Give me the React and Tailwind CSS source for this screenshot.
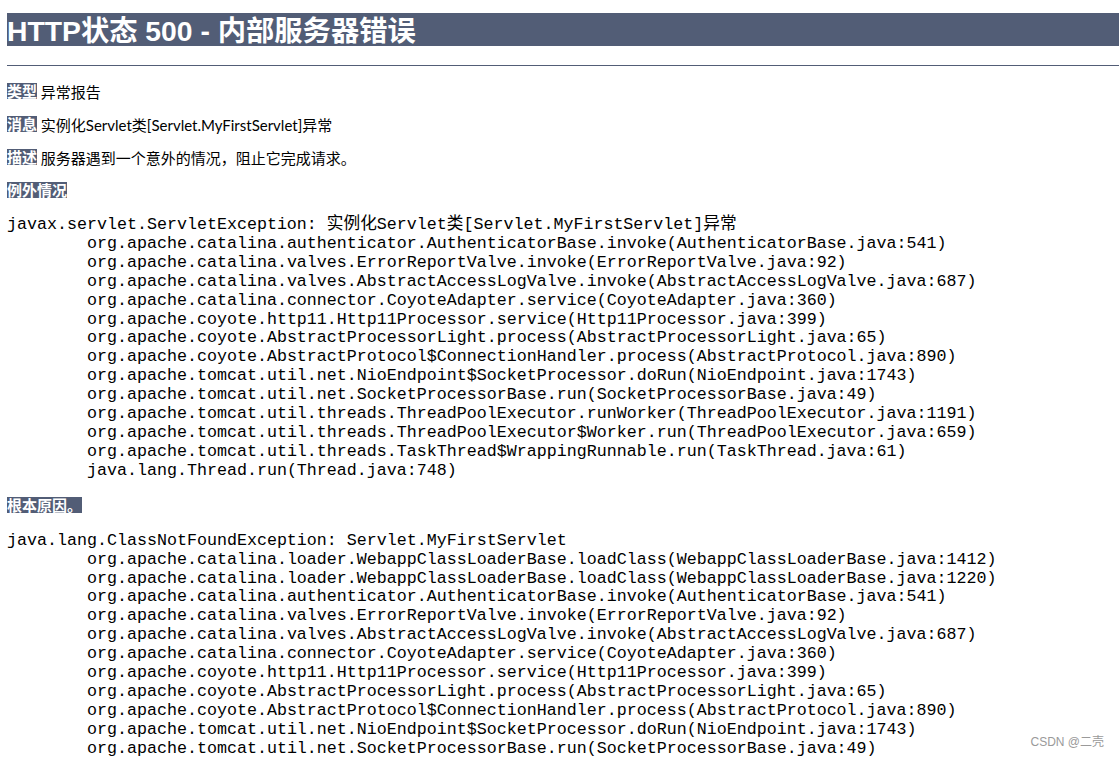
// @ts-nocheck

const sans = '"Liberation Sans", "Noto Sans CJK SC", sans-serif'
const body = 'Lato, "Noto Sans CJK SC", sans-serif'
const mono = '"Liberation Mono", "Noto Sans CJK SC", monospace'

const trace1 = [
    'javax.servlet.ServletException: 实例化Servlet类[Servlet.MyFirstServlet]异常',
    '\torg.apache.catalina.authenticator.AuthenticatorBase.invoke(AuthenticatorBase.java:541)',
    '\torg.apache.catalina.valves.ErrorReportValve.invoke(ErrorReportValve.java:92)',
    '\torg.apache.catalina.valves.AbstractAccessLogValve.invoke(AbstractAccessLogValve.java:687)',
    '\torg.apache.catalina.connector.CoyoteAdapter.service(CoyoteAdapter.java:360)',
    '\torg.apache.coyote.http11.Http11Processor.service(Http11Processor.java:399)',
    '\torg.apache.coyote.AbstractProcessorLight.process(AbstractProcessorLight.java:65)',
    '\torg.apache.coyote.AbstractProtocol$ConnectionHandler.process(AbstractProtocol.java:890)',
    '\torg.apache.tomcat.util.net.NioEndpoint$SocketProcessor.doRun(NioEndpoint.java:1743)',
    '\torg.apache.tomcat.util.net.SocketProcessorBase.run(SocketProcessorBase.java:49)',
    '\torg.apache.tomcat.util.threads.ThreadPoolExecutor.runWorker(ThreadPoolExecutor.java:1191)',
    '\torg.apache.tomcat.util.threads.ThreadPoolExecutor$Worker.run(ThreadPoolExecutor.java:659)',
    '\torg.apache.tomcat.util.threads.TaskThread$WrappingRunnable.run(TaskThread.java:61)',
    '\tjava.lang.Thread.run(Thread.java:748)',
]

const trace2 = [
    'java.lang.ClassNotFoundException: Servlet.MyFirstServlet',
    '\torg.apache.catalina.loader.WebappClassLoaderBase.loadClass(WebappClassLoaderBase.java:1412)',
    '\torg.apache.catalina.loader.WebappClassLoaderBase.loadClass(WebappClassLoaderBase.java:1220)',
    '\torg.apache.catalina.authenticator.AuthenticatorBase.invoke(AuthenticatorBase.java:541)',
    '\torg.apache.catalina.valves.ErrorReportValve.invoke(ErrorReportValve.java:92)',
    '\torg.apache.catalina.valves.AbstractAccessLogValve.invoke(AbstractAccessLogValve.java:687)',
    '\torg.apache.catalina.connector.CoyoteAdapter.service(CoyoteAdapter.java:360)',
    '\torg.apache.coyote.http11.Http11Processor.service(Http11Processor.java:399)',
    '\torg.apache.coyote.AbstractProcessorLight.process(AbstractProcessorLight.java:65)',
    '\torg.apache.coyote.AbstractProtocol$ConnectionHandler.process(AbstractProtocol.java:890)',
    '\torg.apache.tomcat.util.net.NioEndpoint$SocketProcessor.doRun(NioEndpoint.java:1743)',
    '\torg.apache.tomcat.util.net.SocketProcessorBase.run(SocketProcessorBase.java:49)',
]

function Label({ children }) {
    return (
        <b className="inline-block bg-[#525D76] text-white font-bold h-[16px] leading-[16px] align-top">
            {children}
        </b>
    )
}

function Row({ label, text, className }) {
    return (
        <p className={`text-[15px] leading-[18px] text-black ${className}`} style={{ fontFamily: body }}>
            <Label>{label}</Label>
            {text ? <span> {text}</span> : null}
        </p>
    )
}

function Trace({ lines, className }) {
    return (
        <pre
            className={`text-[16.67px] leading-[18.9px] text-black whitespace-pre ${className}`}
            style={{ fontFamily: mono, tabSize: 8 }}
        >
            {lines.join('\n')}
        </pre>
    )
}

export default function App() {
    return (
        <div className="relative min-h-[757px] bg-white pl-[7px] overflow-hidden">
            {/* title bar */}
            <h1
                className="mt-[13px] h-[33px] pt-[3px] leading-[30px] bg-[#525D76] text-white font-bold text-[28.3px] whitespace-nowrap"
                style={{ fontFamily: sans }}
            >
                HTTP状态 500 - 内部服务器错误
            </h1>
            <hr className="mt-[19px] h-px border-0 bg-[#525D76]" />

            <Row className="mt-[17px]" label="类型" text="异常报告" />
            <Row className="mt-[15px]" label="消息" text="实例化Servlet类[Servlet.MyFirstServlet]异常" />
            <Row className="mt-[15px]" label="描述" text="服务器遇到一个意外的情况，阻止它完成请求。" />
            <Row className="mt-[15px]" label="例外情况" />

            <Trace className="mt-[16px]" lines={trace1} />

            <Row className="mt-[16px]" label="根本原因。" />

            <Trace className="mt-[17px]" lines={trace2} />

            {/* watermark */}
            <div
                className="absolute right-[15px] top-[735px] text-[12px] leading-[14px] text-[#9a9a9a]"
                style={{ fontFamily: sans }}
            >
                CSDN @二壳
            </div>
        </div>
    )
}
